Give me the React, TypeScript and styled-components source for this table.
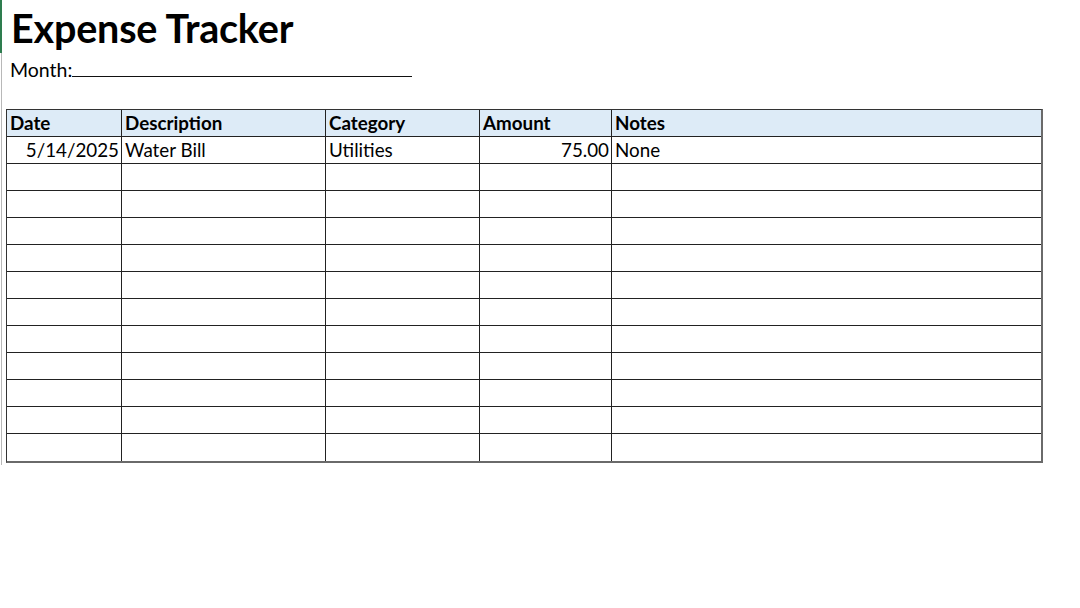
import React from "react";
import styled, { createGlobalStyle } from "styled-components";

const Global = createGlobalStyle`
  html, body { margin: 0; padding: 0; background: #fff; }
  body { font-family: Lato, "Open Sans", sans-serif; color: #000; }
`;

const Page = styled.div`
  position: relative;
  width: 1080px;
  height: 608px;
  background: #fff;
  overflow: hidden;
`;

const EdgeGreen = styled.div`
  position: absolute;
  left: 0;
  top: 0;
  width: 2px;
  height: 53px;
  background: #2e7d4f;
`;

const EdgeGrey = styled.div`
  position: absolute;
  left: 1px;
  top: 53px;
  width: 1px;
  height: 412px;
  background: #b8b8b8;
`;

const Content = styled.div`
  display: flex;
  flex-direction: column;
  padding: 4px 0 0 6px;
`;

const Title = styled.h1`
  margin: 0 0 0 5px;
  font-family: Lato, sans-serif;
  font-weight: 700;
  font-size: 39.5px;
  line-height: 48px;
  letter-spacing: -0.2px;
`;

const MonthRow = styled.div`
  display: flex;
  align-items: flex-end;
  margin-left: 4px;
  height: 30px;
  font-size: 19.5px;
  line-height: 24px;
`;

const Blank = styled.span`
  display: inline-block;
  width: 340px;
  height: 1px;
  background: #111;
  margin: 0 0 5px 0;
`;

const Table = styled.div`
  margin-top: 27px;
  width: 1037px;
  display: grid;
  grid-template-columns: 115px 204px 154px 132px 1fr;
  grid-auto-rows: 27px;
  border-top: 1px solid #333;
  border-left: 1px solid #333;
  border-right: 2px solid #6a6a6a;
  border-bottom: 2px solid #6a6a6a;
  box-sizing: border-box;
`;

const Cell = styled.div<{ $head?: boolean; $right?: boolean; $last?: boolean; $bottom?: boolean }>`
  box-sizing: border-box;
  border-right: ${(p) => (p.$last ? "none" : "1px solid #222")};
  border-bottom: ${(p) => (p.$bottom ? "none" : "1px solid #222")};
  background: ${(p) => (p.$head ? "#ddebf7" : "#fff")};
  font-weight: ${(p) => (p.$head ? 700 : 400)};
  font-size: 18.8px;
  line-height: 26px;
  padding: 0 2px 0 3px;
  text-align: ${(p) => (p.$right ? "right" : "left")};
  white-space: nowrap;
  overflow: hidden;
`;

const headers = ["Date", "Description", "Category", "Amount", "Notes"];
const first = ["5/14/2025", "Water Bill", "Utilities", "75.00", "None"];
const rightAligned = [true, false, false, true, false];

export default function App() {
  const rows: string[][] = [first];
  for (let i = 0; i < 11; i++) rows.push(["", "", "", "", ""]);
  return (
    <Page>
      <Global />
      <EdgeGreen />
      <EdgeGrey />
      <Content>
        <Title>Expense Tracker</Title>
        <MonthRow>
          Month:<Blank />
        </MonthRow>
        <Table>
          {headers.map((h, i) => (
            <Cell key={h} $head $last={i === 4}>
              {h}
            </Cell>
          ))}
          {rows.map((r, ri) =>
            r.map((c, ci) => (
              <Cell
                key={`${ri}-${ci}`}
                $right={rightAligned[ci]}
                $last={ci === 4}
                $bottom={ri === rows.length - 1}
              >
                {c}
              </Cell>
            ))
          )}
        </Table>
      </Content>
    </Page>
  );
}
